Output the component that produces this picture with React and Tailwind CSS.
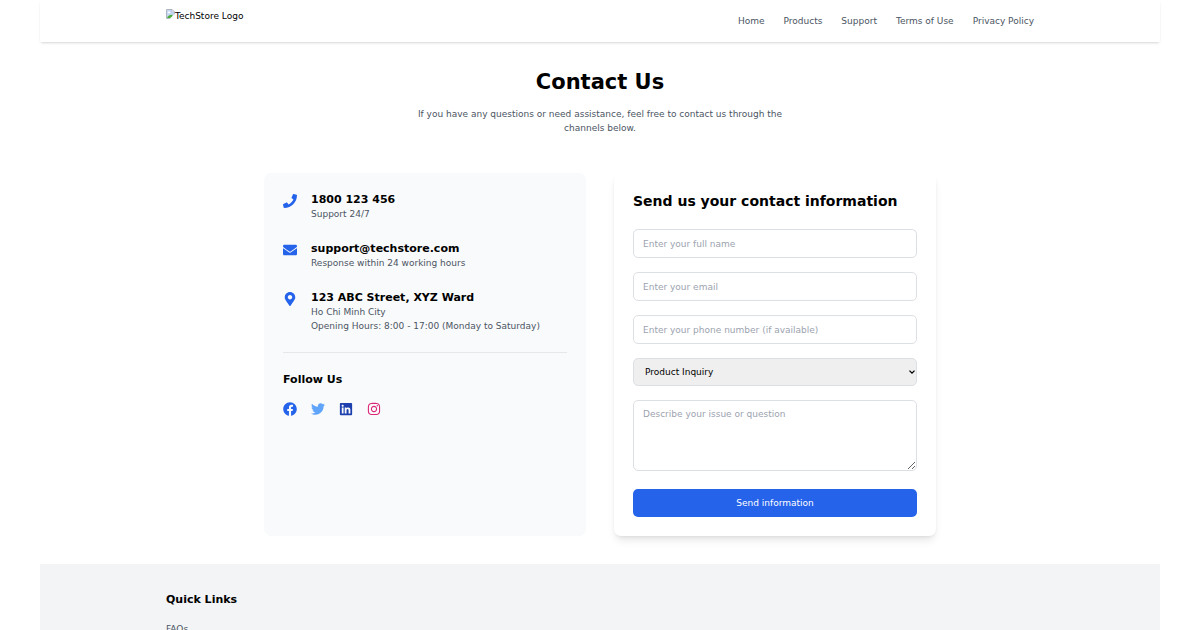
import {
  FaEnvelope,
  FaFacebook,
  FaInstagram,
  FaLinkedin,
  FaMapMarkerAlt,
  FaPhone,
  FaTwitter,
} from "react-icons/fa";

const navLinks = ["Home", "Products", "Support", "Terms of Use", "Privacy Policy"];

const contacts = [
  { Icon: FaPhone, title: "1800 123 456", lines: ["Support 24/7"] },
  { Icon: FaEnvelope, title: "support@techstore.com", lines: ["Response within 24 working hours"] },
  {
    Icon: FaMapMarkerAlt,
    title: "123 ABC Street, XYZ Ward",
    lines: ["Ho Chi Minh City", "Opening Hours: 8:00 - 17:00 (Monday to Saturday)"],
  },
];

const socials = [
  { Icon: FaFacebook, name: "Facebook", color: "text-[#2563eb]" },
  { Icon: FaTwitter, name: "Twitter", color: "text-[#60a5fa]" },
  { Icon: FaLinkedin, name: "LinkedIn", color: "text-[#1e40af]" },
  { Icon: FaInstagram, name: "Instagram", color: "text-[#db2777]" },
];

const inputs = [
  { id: "name", type: "text", label: "Full name", placeholder: "Enter your full name" },
  { id: "email", type: "email", label: "Email", placeholder: "Enter your email" },
  { id: "phone", type: "tel", label: "Phone number", placeholder: "Enter your phone number (if available)" },
];

const field =
  "block w-full rounded-[5px] border border-[#dcdfe4] px-[9px] placeholder:text-[#9ca3af]";

function MissingImageIcon() {
  return (
    <svg className="h-[10px] w-[9px]" viewBox="0 0 9 10" aria-hidden="true">
      <path d="M0.5 0.5H6L8.5 3V6L5 9.5H0.5Z" fill="#c6d7f5" stroke="#a3a9b5" strokeWidth="0.8" />
      <path d="M6 0.5V3H8.5Z" fill="#fff" stroke="#a3a9b5" strokeWidth="0.5" />
      <ellipse cx="3" cy="3.4" rx="1.3" ry="0.8" fill="#fff" />
      <path d="M1 9C1.5 7 3.5 5.6 6.5 5.8L6.5 7.4L4.6 9Z" fill="#4caf3c" />
      <path d="M3.6 9.8L9 4.8V6.4L5.4 9.8Z" fill="#fff" />
    </svg>
  );
}

function Header() {
  return (
    <header className="bg-white shadow-[0_2px_3px_-1px_rgba(0,0,0,0.12),0_1px_2px_-1px_rgba(0,0,0,0.12)]">
      <div className="mx-auto flex max-w-[896px] items-center justify-between px-[14px] py-[9px]">
        <a href="#home" className="flex h-6 items-start text-black">
          <MissingImageIcon />
          <span>TechStore Logo</span>
        </a>
        <nav className="flex gap-[19px] text-[#4b5563]">
          {navLinks.map((link) => (
            <a key={link} href="#nav">{link}</a>
          ))}
        </nav>
      </div>
    </header>
  );
}

function ContactInfo() {
  return (
    <section className="rounded-[7px] bg-[#f9fafb] p-[19px]">
      <div className="flex flex-col gap-5">
        {contacts.map(({ Icon, title, lines }) => (
          <div key={title} className="flex items-start gap-[14px]">
            <Icon className="mt-[2px] size-[14px] shrink-0 text-[#2563eb]" />
            <div>
              <h3 className="text-[11px] leading-[15px] font-bold text-black">{title}</h3>
              {lines.map((line) => (
                <p key={line} className="text-[#4b5563]">{line}</p>
              ))}
            </div>
          </div>
        ))}
      </div>
      <div className="mt-[19px] border-t border-[#e5e7eb] pt-[19px]">
        <h3 className="mb-[14px] text-[11px] leading-4 font-bold text-black">Follow Us</h3>
        <div className="flex gap-[14px]">
          {socials.map(({ Icon, name, color }) => (
            <a key={name} href="#social" aria-label={name} className={color}>
              <Icon className="size-[14px]" />
            </a>
          ))}
        </div>
      </div>
    </section>
  );
}

function ContactForm() {
  return (
    <section className="rounded-[7px] bg-white p-[19px] shadow-[0_6px_9px_-2px_rgba(0,0,0,0.1),0_2px_4px_-2px_rgba(0,0,0,0.1)]">
      <h2 className="mb-[19px] text-[14px] leading-[18px] font-bold text-black">
        Send us your contact information
      </h2>
      <form className="flex flex-col gap-[14px]" onSubmit={(event) => event.preventDefault()}>
        {inputs.map(({ id, type, label, placeholder }) => (
          <input
            key={id}
            id={id}
            type={type}
            aria-label={label}
            placeholder={placeholder}
            className={`${field} h-[29px]`}
          />
        ))}
        <div className="relative">
          <select
            id="topic"
            aria-label="Topic"
            className="block h-7 w-full appearance-none rounded-[5px] border border-[#dcdfe4] bg-[#efefef] px-[11px] text-black"
          >
            <option>Product Inquiry</option>
          </select>
          <svg
            className="pointer-events-none absolute top-3 right-[2px] h-1 w-[6px]"
            viewBox="0 0 6 4"
            fill="none"
            stroke="#000"
            strokeWidth="1.3"
            aria-hidden="true"
          >
            <path d="M0.5 0.6L3 3.1L5.5 0.6" />
          </svg>
        </div>
        <textarea
          id="message"
          aria-label="Message"
          placeholder="Describe your issue or question"
          className={`${field} mb-1 h-[71px] py-[6px]`}
        />
        <button type="submit" className="h-7 w-full rounded-[5px] bg-[#2563eb] text-white">
          Send information
        </button>
      </form>
    </section>
  );
}

export default function App() {
  return (
    <div className="min-h-screen bg-white px-10 font-['DejaVu_Sans',sans-serif] text-[9px] leading-[14px]">
      <Header />
      <main className="mx-auto max-w-[700px] px-[14px] py-7">
        <div className="mb-[38px] text-center">
          <h1 className="mb-3 text-[21px] leading-[25px] font-bold text-black">Contact Us</h1>
          <p className="mx-auto max-w-[392px] text-[#4b5563]">
            If you have any questions or need assistance, feel free to contact us through the
            channels below.
          </p>
        </div>
        <div className="grid gap-7 md:grid-cols-2">
          <ContactInfo />
          <ContactForm />
        </div>
      </main>
      <footer className="bg-[#f3f4f6] py-7">
        <div className="mx-auto max-w-[896px] px-[14px]">
          <h3 className="mb-[14px] text-[11px] leading-4 font-bold text-black">Quick Links</h3>
          <ul>
            <li>
              <a href="#faqs" className="text-[#4b5563]">FAQs</a>
            </li>
          </ul>
        </div>
      </footer>
    </div>
  );
}
